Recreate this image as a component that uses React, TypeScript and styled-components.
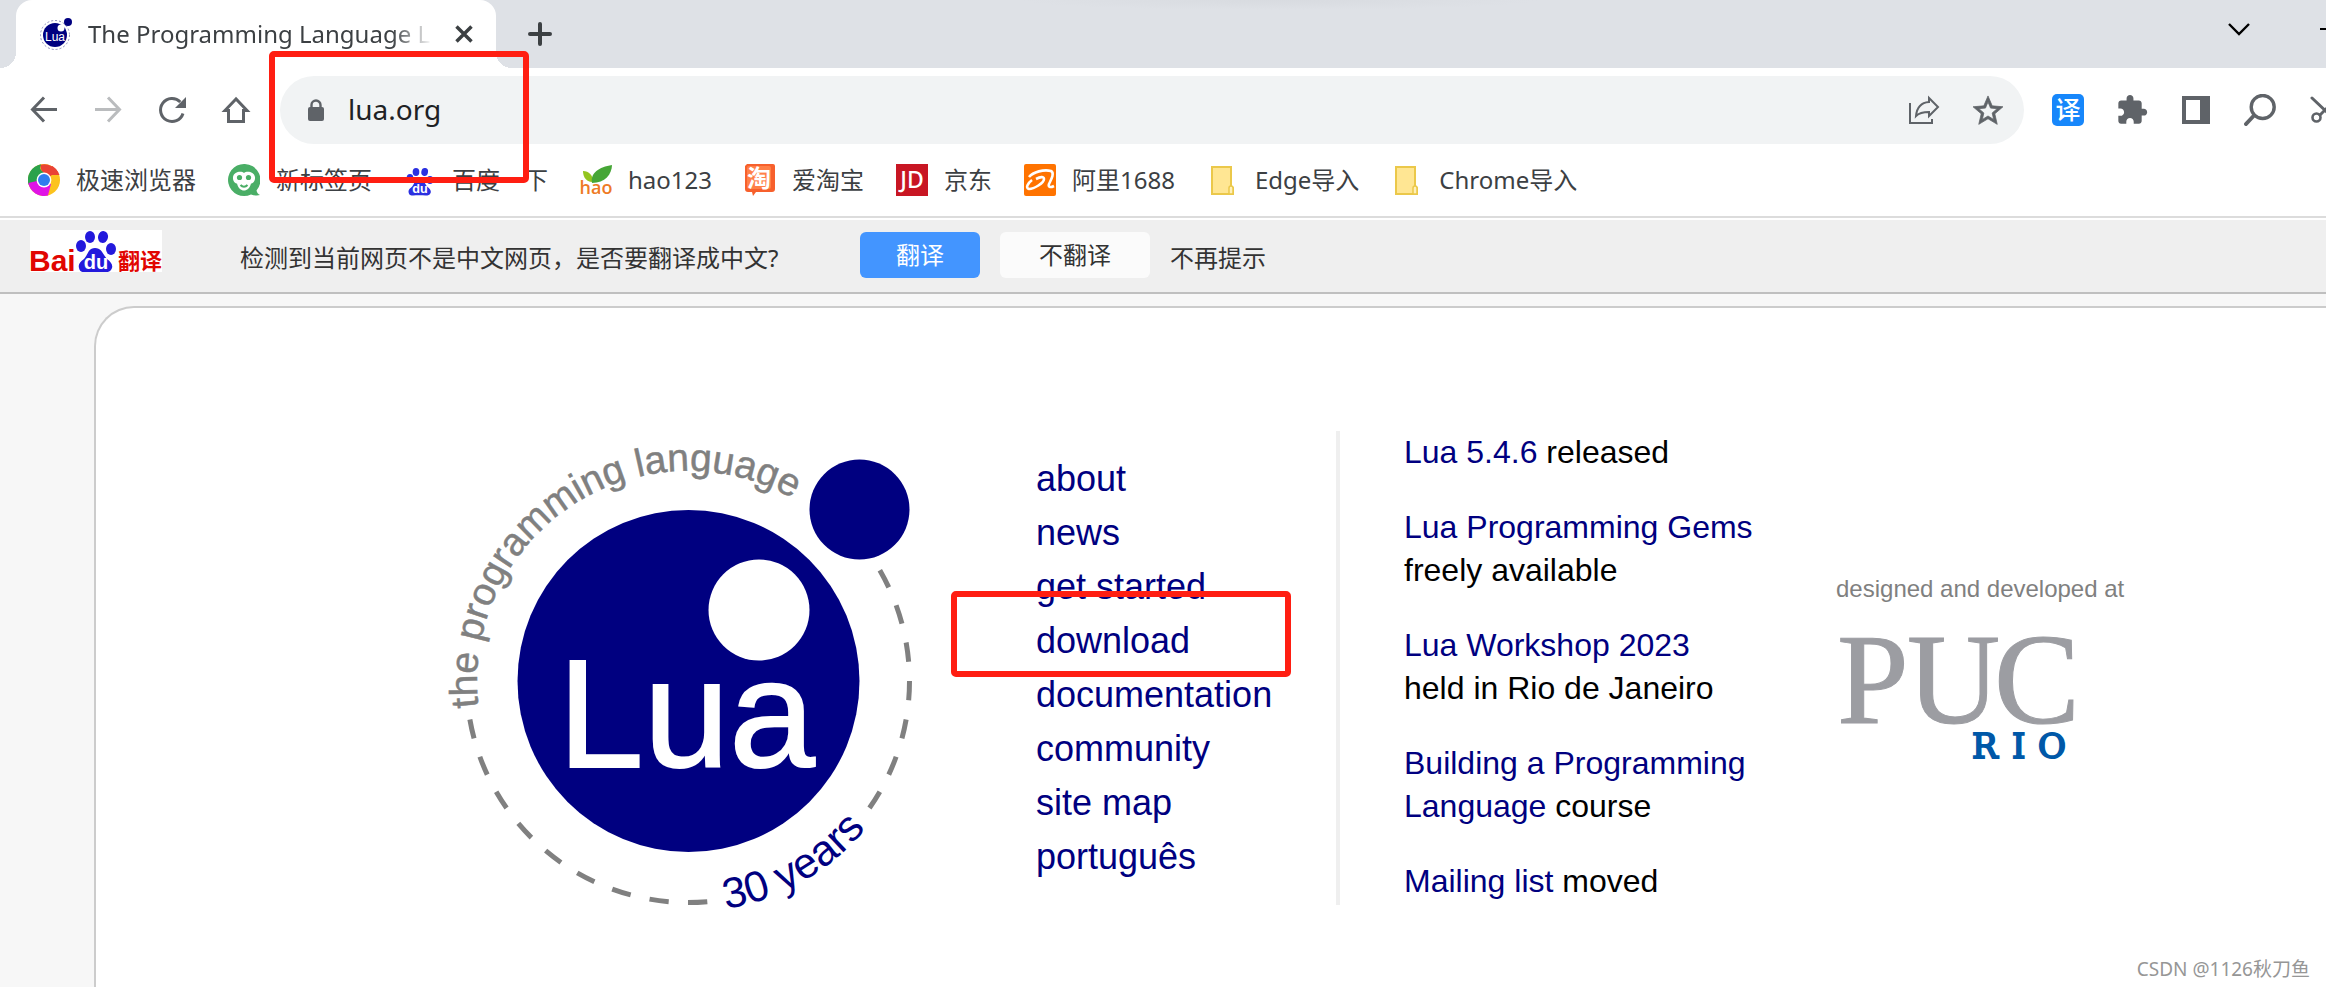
import React from 'react';
import styled, { createGlobalStyle } from 'styled-components';

const uiFont = `'Noto Sans', 'Noto Sans CJK SC', sans-serif`;
const pageFont = `'Liberation Sans', Arial, sans-serif`;
const navy = '#000080';
const iconGray = '#5f6368';

const GlobalStyle = createGlobalStyle`
  *, *::before, *::after { box-sizing: border-box; }
  body { margin: 0; background: #f7f7f7; font-family: ${uiFont}; }
  button { border: 0; padding: 0; background: none; font: inherit; cursor: pointer; }
  a { text-decoration: none; }
`;

const Window = styled.div`
  position: relative;
  display: flex;
  flex-direction: column;
  min-height: 100vh;
  overflow-x: clip;
`;

/* ---------- browser chrome ---------- */

const TabStrip = styled.div`
  display: flex;
  align-items: flex-end;
  height: 68px;
  padding-left: 16px;
  background: radial-gradient(ellipse 260px 10px at 55% 0, #d8dbe0, #dee1e6);
`;

const Tab = styled.div`
  position: relative;
  display: flex;
  align-items: center;
  width: 480px;
  height: 68px;
  padding: 0 20px 0 24px;
  border-radius: 16px 16px 0 0;
  background: #fff;

  &::before,
  &::after {
    content: '';
    position: absolute;
    bottom: 0;
    width: 16px;
    height: 16px;
  }
  &::before {
    right: 100%;
    background: radial-gradient(circle at 0 0, transparent 16px, #fff 16px);
  }
  &::after {
    left: 100%;
    background: radial-gradient(circle at 100% 0, transparent 16px, #fff 16px);
  }
`;

const TabTitle = styled.span`
  flex: 1;
  margin: 0 20px 0 16px;
  overflow: hidden;
  white-space: nowrap;
  font-size: 24px;
  line-height: 34px;
  color: #3c4043;
  mask-image: linear-gradient(to right, #000 calc(100% - 40px), transparent);
`;

const IconButton = styled.button<{ $color?: string }>`
  display: flex;
  flex: none;
  color: ${(p) => p.$color ?? iconGray};
`;

const NewTab = styled(IconButton)`
  align-self: center;
  margin-left: 28px;
`;

const WindowControls = styled.div`
  display: flex;
  align-self: center;
  gap: 65px;
  margin: 0 -26px 8px auto;
`;

const Toolbar = styled.div`
  display: flex;
  align-items: center;
  gap: 28px;
  padding: 8px 0 8px 28px;
  margin-right: -14px;
  background: #fff;
`;

const ButtonRow = styled.div`
  display: flex;
  gap: 32px;
`;

const Omnibox = styled.label`
  position: relative;
  display: flex;
  flex: 1;
  align-items: center;
  gap: 16px;
  height: 68px;
  padding: 0 20px;
  border-radius: 34px;
  background: #f1f3f4;
  color: ${iconGray};
`;

const Address = styled.input`
  flex: 1;
  min-width: 0;
  padding: 0 0 2px;
  border: 0;
  outline: 0;
  background: none;
  font: 28px/40px ${uiFont};
  color: #202124;
`;

const Marker = styled.div<{ $left: number; $top: number; $width: number; $height: number }>`
  position: absolute;
  z-index: 2;
  left: ${(p) => p.$left}px;
  top: ${(p) => p.$top}px;
  width: ${(p) => p.$width}px;
  height: ${(p) => p.$height}px;
  border: 6px solid #ff1e12;
  border-radius: 5px;
  pointer-events: none;
`;

const Bookmarks = styled.nav`
  display: flex;
  gap: 32px;
  padding: 8px 28px 16px;
  border-bottom: 2px solid #dcdcdc;
  background: #fff;
`;

const Bookmark = styled.a`
  display: flex;
  align-items: center;
  gap: 16px;
  font-size: 24px;
  line-height: 40px;
  white-space: nowrap;
  color: #3c4043;
`;

/* ---------- translate bar ---------- */

const TranslateBar = styled.div`
  display: flex;
  align-items: center;
  height: 76px;
  padding: 0 30px 2px;
  border-top: 2px solid #fff;
  border-bottom: 2px solid #bfbfbf;
  background: #efefef;
  font-size: 24px;
  line-height: 32px;
  color: #333;
`;

const BaiduLogo = styled.svg`
  display: block;
  flex: none;
  margin-bottom: 8px;
  background: #fff;
`;

const Notice = styled.span`
  flex: 0 0 698px;
  padding: 6px 0 0 78px;
`;

const BarButton = styled.button<{ $primary?: boolean }>`
  height: 46px;
  margin-right: 20px;
  padding: 0 ${(p) => (p.$primary ? 36 : 39)}px;
  border-radius: 6px;
  background: ${(p) => (p.$primary ? '#4395ff' : '#fbfbfb')};
  color: ${(p) => (p.$primary ? '#fff' : '#333')};
`;

const Dismiss = styled.button`
  padding-top: 6px;
  color: #333;
`;

/* ---------- page ---------- */

const Page = styled.main`
  display: flex;
  flex: 1;
  padding: 12px 0 0 94px;
  background: #f7f7f7;
`;

const Card = styled.div`
  display: flex;
  flex: 1;
  align-items: flex-start;
  padding: 123px 0 78px 344px;
  border: solid #ccc;
  border-width: 2px 0 0 2px;
  border-radius: 40px 0 0 0;
  background: #fff;
  font-family: ${pageFont};
`;

const Columns = styled.div`
  display: flex;
  align-items: center;
`;

const LuaArt = styled.svg`
  display: block;
  flex: none;
  overflow: visible;
`;

const SiteNav = styled.nav`
  position: relative;
  display: flex;
  flex-direction: column;
  align-items: flex-start;
  width: 300px;
  margin-left: 116px;
`;

const SiteLink = styled.a`
  font-size: 36px;
  line-height: 54px;
  color: ${navy};
`;

const News = styled.section`
  display: flex;
  flex-direction: column;
  gap: 32px;
  width: 500px;
  padding: 0 0 2px 64px;
  border-left: 4px solid #efefef;
`;

const NewsItem = styled.p`
  margin: 0;
  font-size: 32px;
  line-height: 43px;
  color: #000;

  a { color: ${navy}; }
`;

const Credit = styled.section`
  display: flex;
  flex-direction: column;
  gap: 24px;
  font-size: 24px;
  line-height: 36px;
  white-space: nowrap;
  color: #808080;
`;

const Watermark = styled.span`
  position: absolute;
  right: 16px;
  bottom: 4px;
  font-size: 19px;
  line-height: 28px;
  color: #969696;
`;

/* ---------- drawings ---------- */

const Icon = ({ children, box = '0 0 32 32', size = 32 }: { children: React.ReactNode; box?: string; size?: number }) => (
  <svg width={size} height={size} viewBox={box} fill="none" stroke="currentColor" aria-hidden="true">
    {children}
  </svg>
);

const paw = (
  <>
    <ellipse cx="51" cy="16" rx="5" ry="6" />
    <ellipse cx="60" cy="7" rx="5" ry="6" />
    <ellipse cx="73" cy="7" rx="5" ry="6" transform="rotate(12 73 7)" />
    <ellipse cx="81" cy="19" rx="5" ry="6" />
    <path d="M65 18c7 0 8 7 12 11 4 3 6 6 5 9-2 6-8 4-17 4s-15 2-16-4c-1-4 1-6 5-9 4-4 4-11 11-11z" />
  </>
);

const BaiduTranslate = () => (
  <BaiduLogo width="132" height="42" viewBox="0 0 132 42" role="img" aria-label="Baidu">
    <text x="-1" y="41" fontFamily="Liberation Sans" fontWeight="700" fontSize="30" fill="#e10601">Bai</text>
    <g fill="#2319dc">{paw}</g>
    <text x="66" y="39" textAnchor="middle" fontFamily="Liberation Sans" fontWeight="700" fontSize="20" fill="#fff">du</text>
    <text x="88" y="39" fontFamily="Noto Sans CJK SC" fontWeight="700" fontSize="22" fill="#e10601">翻译</text>
  </BaiduLogo>
);

const LuaFavicon = () => (
  <svg width="32" height="32" viewBox="0 0 32 32" aria-hidden="true">
    <circle cx="15" cy="17" r="14.5" fill="none" stroke="#8c8cb8" strokeDasharray="2 2" />
    <circle cx="15" cy="17" r="12" fill={navy} />
    <circle cx="28" cy="4" r="4" fill={navy} />
    <circle cx="21" cy="10" r="3.5" fill="#fff" />
    <text x="15" y="23" textAnchor="middle" fontFamily="Liberation Sans" fontSize="12" fill="#fff">Lua</text>
  </svg>
);

const orbit = (from: number, to: number) => {
  const at = (deg: number) => {
    const a = (deg * Math.PI) / 180;
    return `${(248 + 221.5 * Math.cos(a)).toFixed(2)} ${(250 + 221.5 * Math.sin(a)).toFixed(2)}`;
  };
  return `M${at(from)}A221.5 221.5 0 0 1 ${at(to)}`;
};

const dashes = [-30, -20, -10, 0, 10, 20, 30, 85, 95, 105, 115, 125, 135, 145, 155, 165];

const LuaLogo = () => (
  <LuaArt width="480" height="474" viewBox="0 0 480 474" role="img" aria-label="Lua">
    <circle cx="248.5" cy="250" r="171" fill={navy} />
    <circle cx="419.5" cy="78.5" r="50" fill={navy} />
    <circle cx="319" cy="179" r="50.5" fill="#fff" />
    <g fill="none" stroke="#808080" strokeWidth="5">
      {dashes.map((d) => <path key={d} d={orbit(d, d + 5)} />)}
    </g>
    <path id="arc-top" d="M38.5 276A211 211 0 1 1 459 250" fill="none" />
    <path id="arc-bottom" d="M286 478A231 231 0 0 0 478.5 236" fill="none" />
    <g fontFamily="Liberation Sans">
      <text fontSize="39" fill="#808080" stroke="#808080" strokeWidth="0.5">
        <textPath href="#arc-top">the programming language</textPath>
      </text>
      <text fontSize="43" fill={navy}>
        <textPath href="#arc-bottom">30 years</textPath>
      </text>
      <text x="118" y="336" fontSize="154" fill="#fff" stroke="#fff" strokeWidth="2">Lua</text>
    </g>
  </LuaArt>
);

const PucLogo = () => (
  <svg width="240" height="134" viewBox="0 0 240 134" role="img" aria-label="PUC-Rio">
    <g fontFamily="Liberation Serif" fontSize="129" fill="#9c9da2" stroke="#9c9da2">
      <text x="1" y="92">P</text>
      <text x="71" y="92">U</text>
      <text x="158" y="92">C</text>
    </g>
    <g fontFamily="DejaVu Serif" fontSize="34" fill="#0058a8" stroke="#0058a8" strokeWidth="2">
      <text x="136" y="127">R</text>
      <text x="176" y="127">I</text>
      <text x="202" y="127">O</text>
    </g>
  </svg>
);

const ChromeMark = () => (
  <Icon>
    <g stroke="none">
      <circle cx="16" cy="16" r="16" fill="#fcc31e" />
      <path d="M16 16L12 1A16 16 0 0 1 31.5 11L24 11z" fill="#ea4335" />
      <path d="M16 9C11 5 12 4 13 0.3A16 16 0 0 0 0.5 20.5L10 20z" fill="#2ba24c" />
      <path d="M0.3 19A16 16 0 0 0 20 31.5L23 20L9 17z" fill="#e014e6" />
      <path d="M16 9h14.5a16 16 0 0 0-6-7z" fill="#ea4335" />
      <circle cx="16" cy="16" r="7.4" fill="#fff" />
      <circle cx="16" cy="16" r="6" fill="#2f7cee" />
    </g>
  </Icon>
);

const MonkeyMark = () => (
  <Icon>
    <g stroke="none">
      <path d="M16 0a16 16 0 1 0 7 30.4c3 1 6 1.4 9 .6-2-1-3-2.5-3.5-4.5A16 16 0 0 0 16 0z" fill="#4aae66" />
      <path d="M16 9c-2-2-10-2-11 4-.4 4 2 6.500 4 6.500C10 24 13 26.500 16 26.500s6-2.500 7-7c2 0 4.400-2.500 4-6.500-1-6-9-6-11-4z" fill="#fff" />
      <circle cx="11.5" cy="13.5" r="2.6" fill="#4aae66" />
      <circle cx="20.5" cy="13.5" r="2.6" fill="#4aae66" />
    </g>
    <path d="M12.5 21c2 2.2 5 2.2 7 0" stroke="#4aae66" strokeWidth="2" />
  </Icon>
);

const PawMark = () => (
  <Icon box="42 -5 48 48">
    <g stroke="none">
      <g fill="#2b30e0">{paw}</g>
      <text x="66" y="39" textAnchor="middle" fontFamily="Liberation Sans" fontWeight="700" fontSize="19" fill="#fff">du</text>
    </g>
  </Icon>
);

const HaoMark = () => (
  <Icon>
    <g stroke="none">
      <path d="M13 18C4 18 3 10 3 7c6 0 10 4 10 11z" fill="#93c520" />
      <path d="M12 19C10 9 19 3 32 1c0 9-7 18-20 18z" fill="#46a636" />
      <text x="16" y="30" textAnchor="middle" fontFamily="Open Sans" fontWeight="600" fontSize="18" fill="#ee7a25">hao</text>
    </g>
  </Icon>
);

const TaobaoMark = () => (
  <Icon>
    <g stroke="none">
      <path d="M3 0h26a2 2 0 0 1 2 2v23a3 3 0 0 1-3 3H12l-3 4-1-4H4a3 3 0 0 1-3-3V2z" fill="#f7602c" />
      <rect x="3" y="2" width="24" height="23" rx="2" fill="#ff8048" />
      <text x="15" y="23" textAnchor="middle" fontFamily="Noto Sans CJK SC" fontWeight="700" fontSize="24" fill="#fff">淘</text>
    </g>
  </Icon>
);

const JdMark = () => (
  <Icon>
    <g stroke="none">
      <rect width="32" height="32" fill="#c81623" />
      <text x="16" y="24" textAnchor="middle" fontFamily="Noto Sans" fontWeight="500" fontSize="23" fill="#fff">JD</text>
    </g>
  </Icon>
);

const AliMark = () => (
  <Icon>
    <rect width="32" height="32" rx="2" fill="#ff7300" stroke="none" />
    <path d="M5 13C9 8 20 5 27 7c4 2 0 9-2 13-1 3 1 4 5 2M12 15c4-2 8-3 8 0 0 4-10 10-15 10-4-1-1-6 3-9" stroke="#fff" strokeWidth="2.6" />
  </Icon>
);

const FolderMark = () => (
  <Icon>
    <path d="M5 3h19v19l2 2v6H5z" fill="#ffe693" stroke="#ebc84a" strokeWidth="2" />
    <path d="M22 30v-6a2 2 0 0 1 4 0v6z" fill="#fff0b8" stroke="#ebc84a" strokeWidth="1.5" />
  </Icon>
);

const bookmarks = [
  { label: '极速浏览器', mark: <ChromeMark /> },
  { label: '新标签页', mark: <MonkeyMark /> },
  { label: '百度一下', mark: <PawMark /> },
  { label: 'hao123', mark: <HaoMark /> },
  { label: '爱淘宝', mark: <TaobaoMark /> },
  { label: '京东', mark: <JdMark /> },
  { label: '阿里1688', mark: <AliMark /> },
  { label: 'Edge导入', mark: <FolderMark /> },
  { label: 'Chrome导入', mark: <FolderMark /> },
];

const siteLinks = ['about', 'news', 'get started', 'download', 'documentation', 'community', 'site map', 'português'];

export default function App() {
  return (
    <Window>
      <GlobalStyle />
      <TabStrip>
        <Tab>
          <LuaFavicon />
          <TabTitle>The Programming Language Lua</TabTitle>
          <IconButton aria-label="Close tab" $color="#3c4043">
            <Icon size={24}><path d="M6 6l20 20M26 6L6 26" strokeWidth="4.6" /></Icon>
          </IconButton>
        </Tab>
        <NewTab aria-label="New tab" $color="#3c4043">
          <Icon><path d="M16 6v20M6 16h20" strokeWidth="4" strokeLinecap="round" /></Icon>
        </NewTab>
        <WindowControls>
          <IconButton aria-label="Search tabs" $color="#000">
            <Icon><path d="M6 10l10 10 10-10" strokeWidth="2.4" /></Icon>
          </IconButton>
          <IconButton aria-label="Minimize" $color="#000">
            <Icon><path d="M0 15h20" strokeWidth="2" /></Icon>
          </IconButton>
        </WindowControls>
      </TabStrip>

      <Toolbar>
        <ButtonRow>
          <IconButton aria-label="Back">
            <Icon><path d="M29 15.5H5M16 3.5L4.5 15.5L16 27.5" strokeWidth="3" /></Icon>
          </IconButton>
          <IconButton aria-label="Forward" $color="#babcbe">
            <Icon><path d="M3 15.5h24M16 3.5l11.5 12L16 27.5" strokeWidth="3" /></Icon>
          </IconButton>
          <IconButton aria-label="Reload">
            <Icon>
              <path d="M27 19.5A11.5 11.5 0 1 1 24.3 8" strokeWidth="3" />
              <path d="M30 3v11H19z" fill="currentColor" stroke="none" />
            </Icon>
          </IconButton>
          <IconButton aria-label="Home">
            <Icon><path d="M16 5L5 16.5H8.5V27.5H23.5V16.5H27Z" strokeWidth="3" /></Icon>
          </IconButton>
        </ButtonRow>
        <Omnibox>
          <Icon>
            <rect x="8" y="13" width="16" height="14" rx="2" fill="currentColor" stroke="none" />
            <path d="M11.5 14v-3a4.5 4.5 0 0 1 9 0v3" strokeWidth="2.4" />
          </Icon>
          <Address aria-label="Address" defaultValue="lua.org" />
          <ButtonRow>
            <IconButton aria-label="Share">
              <Icon>
                <path d="M2 9V29H24V25" strokeWidth="2" />
                <path d="M8 22C9 12 14 8.5 21 8V4L30 13L21 22V18C15 18 11 19 8 22Z" strokeWidth="2" />
              </Icon>
            </IconButton>
            <IconButton aria-label="Bookmark this page">
              <Icon box="1.3 0.7 21.4 21.4">
                <path
                  fill="currentColor"
                  strokeWidth="0.5"
                  d="M22 9.240l-7.190-.620L12 2 9.190 8.630 2 9.240l5.460 4.730L5.820 21 12 17.270 18.180 21l-1.630-7.030L22 9.240zM12 15.400l-3.760 2.270 1-4.280-3.320-2.880 4.380-.380L12 6.100l1.710 4.040 4.380.380-3.320 2.880 1 4.280L12 15.400z"
                />
              </Icon>
            </IconButton>
          </ButtonRow>
          <Marker $left={-11} $top={-25} $width={260} $height={132} />
        </Omnibox>
        <ButtonRow>
          <IconButton aria-label="Translate">
            <Icon>
              <rect width="32" height="32" rx="5" fill="#1787fb" stroke="none" />
              <text x="16" y="25" textAnchor="middle" fontFamily="Noto Sans CJK SC" fontWeight="500" fontSize="25" fill="#fff" stroke="none">译</text>
            </Icon>
          </IconButton>
          <IconButton aria-label="Extensions">
            <Icon box="0.3 0.3 23.3 23.3">
              <path
                fill="currentColor"
                stroke="none"
                d="M20.500 11H19V7c0-1.100-.900-2-2-2h-4V3.500C13 2.120 11.880 1 10.500 1S8 2.120 8 3.500V5H4c-1.100 0-1.990.900-1.990 2v3.800H3.500c1.490 0 2.700 1.210 2.700 2.700s-1.210 2.700-2.700 2.700H2V20c0 1.100.900 2 2 2h3.800v-1.500c0-1.490 1.210-2.700 2.700-2.700 1.490 0 2.700 1.210 2.700 2.700V22H17c1.100 0 2-.900 2-2v-4h1.500c1.380 0 2.500-1.120 2.500-2.500S21.880 11 20.500 11z"
              />
            </Icon>
          </IconButton>
          <IconButton aria-label="Side panel">
            <Icon><path d="M2 2h28v28H2zM6 6v20h14V6z" fill="currentColor" fillRule="evenodd" stroke="none" /></Icon>
          </IconButton>
          <IconButton aria-label="Search">
            <Icon>
              <circle cx="18.7" cy="13" r="11.5" strokeWidth="3.4" />
              <path d="M10 21.5L2 30" strokeWidth="4" strokeLinecap="round" />
            </Icon>
          </IconButton>
          <IconButton aria-label="Screenshot">
            <Icon>
              <path d="M4 4l20 19M12 21L28 5" strokeWidth="3" strokeLinecap="round" />
              <circle cx="8.5" cy="23.5" r="4" strokeWidth="2.6" />
              <circle cx="25" cy="24" r="4" strokeWidth="2.6" />
            </Icon>
          </IconButton>
        </ButtonRow>
      </Toolbar>

      <Bookmarks aria-label="Bookmarks">
        {bookmarks.map((b) => (
          <Bookmark key={b.label} href="#">
            {b.mark}
            {b.label}
          </Bookmark>
        ))}
      </Bookmarks>

      <TranslateBar>
        <BaiduTranslate />
        <Notice>检测到当前网页不是中文网页，是否要翻译成中文?</Notice>
        <BarButton $primary>翻译</BarButton>
        <BarButton>不翻译</BarButton>
        <Dismiss>不再提示</Dismiss>
      </TranslateBar>

      <Page>
        <Card>
          <Columns>
            <LuaLogo />
            <SiteNav aria-label="Site">
              {siteLinks.map((label) => (
                <SiteLink key={label} href="#">{label}</SiteLink>
              ))}
              <Marker $left={-85} $top={139} $width={340} $height={86} />
            </SiteNav>
            <News>
              <NewsItem><a href="#">Lua 5.4.6</a> released</NewsItem>
              <NewsItem><a href="#">Lua Programming Gems</a><br />freely available</NewsItem>
              <NewsItem><a href="#">Lua Workshop 2023</a><br />held in Rio de Janeiro</NewsItem>
              <NewsItem><a href="#">Building a Programming<br />Language</a> course</NewsItem>
              <NewsItem><a href="#">Mailing list</a> moved</NewsItem>
            </News>
            <Credit>
              designed and developed at
              <PucLogo />
            </Credit>
          </Columns>
        </Card>
      </Page>
      <Watermark>CSDN @1126秋刀鱼</Watermark>
    </Window>
  );
}
